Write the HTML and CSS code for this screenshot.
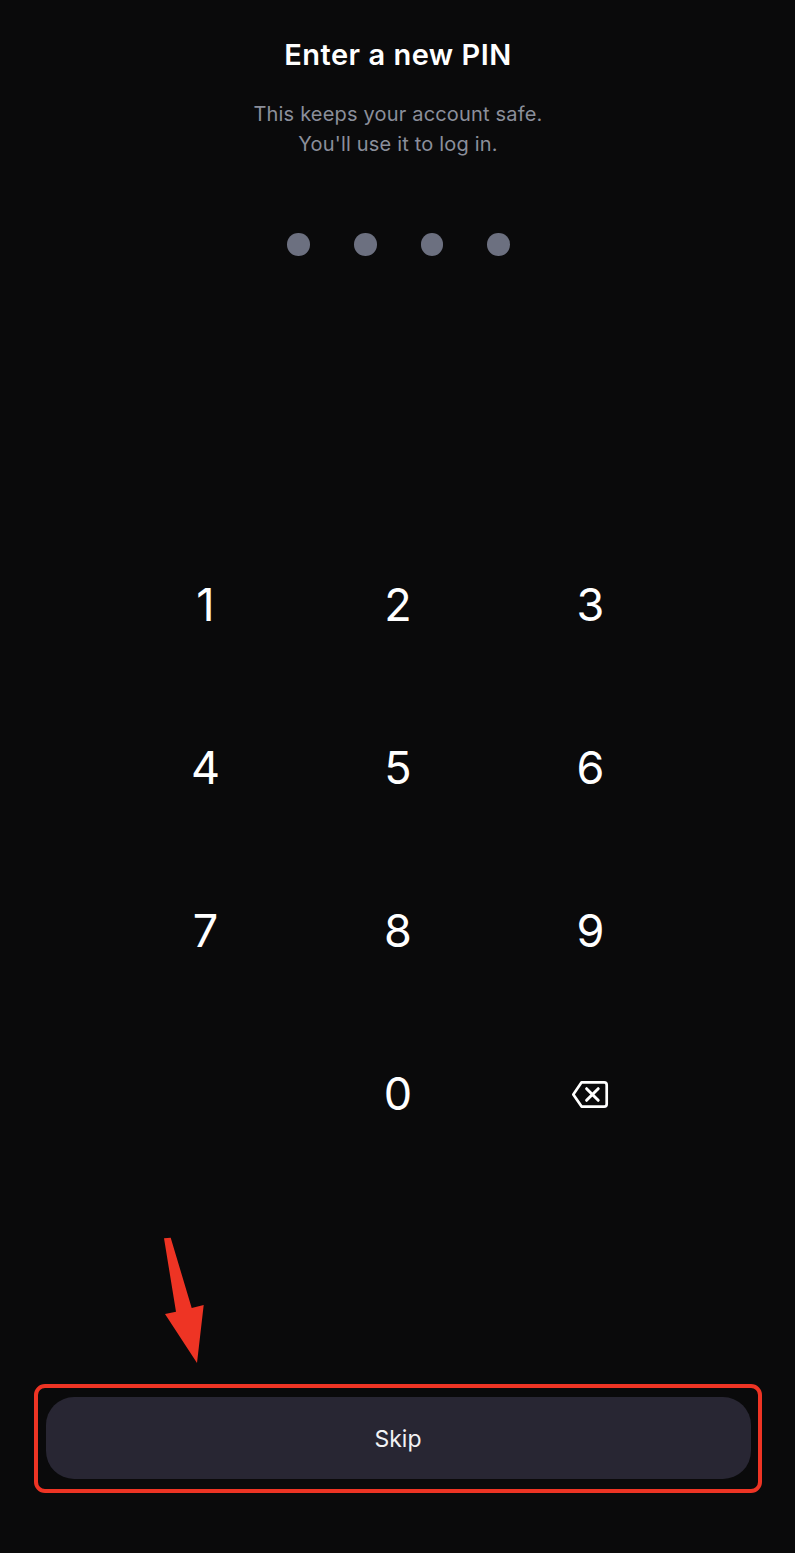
FILE: index.html
```html
<!DOCTYPE html>
<html lang="en">
<head>
<meta charset="utf-8">
<title>Enter a new PIN</title>
<link rel="stylesheet" href="styles.css">
</head>
<body>
<main class="screen">
  <header class="intro">
    <h1 class="title">Enter a new PIN</h1>
    <p class="subtitle">This keeps your account safe.<br>You'll use it to log in.</p>
  </header>
  <div class="dots">
    <span class="dot"></span><span class="dot"></span><span class="dot"></span><span class="dot"></span>
  </div>
  <div class="keypad">
    <button class="key">1</button>
    <button class="key">2</button>
    <button class="key">3</button>
    <button class="key">4</button>
    <button class="key">5</button>
    <button class="key">6</button>
    <button class="key">7</button>
    <button class="key">8</button>
    <button class="key">9</button>
    <span class="key"></span>
    <button class="key">0</button>
    <button class="key" aria-label="Delete">
      <svg class="backspace" width="38" height="28" viewBox="0 0 38 28" fill="none" stroke="#fff" stroke-width="2.7" stroke-linejoin="round" stroke-linecap="round">
        <path d="M9.6 2.3H32.1a2.6 2.6 0 0 1 2.6 2.6V24a2.6 2.6 0 0 1-2.6 2.6H9.6L1.3 14.5Z"/>
        <path stroke-width="3" d="M14.6 8.7L26.2 20.3M26.2 8.7L14.6 20.3"/>
      </svg>
    </button>
  </div>
  <button class="skip">Skip</button>
  <div class="callout-box"></div>
  <svg class="callout-arrow" width="44" height="130" viewBox="160 1235 44 130">
    <path fill="#ee3424" d="M164 1238.3L170.7 1237.7L191.7 1308L203.7 1305L197 1363L165 1314L176 1311.7Z"/>
  </svg>
</main>
</body>
</html>
```
FILE: styles.css
```css
* { box-sizing: border-box; }
html, body { margin: 0; padding: 0; }
body { background: #0a0a0b; font-family: Inter, "Liberation Sans", sans-serif; }
.screen {
  position: relative;
  width: 795px;
  height: 1553px;
  overflow: hidden;
  display: flex;
  flex-direction: column;
  align-items: center;
  background: #0a0a0b;
}
.intro { padding-top: 37px; padding-left: 1px; text-align: center; }
.title {
  margin: 0;
  font-size: 29px;
  line-height: 36px;
  letter-spacing: 0.5px;
  font-weight: 600;
  color: #fff;
}
.subtitle {
  margin: 26px 0 0;
  font-size: 20px;
  line-height: 30px;
  letter-spacing: 0.18px;
  font-weight: 400;
  color: #8b8f9b;
}
.dots { display: flex; gap: 44px; margin-top: 74px; margin-left: 2px; }
.dot { width: 22.6px; height: 22.6px; border-radius: 50%; background: #6c7080; }
.keypad {
  display: grid;
  grid-template-columns: repeat(3, 192.5px);
  grid-auto-rows: 163px;
  margin-top: 267.5px;
  margin-left: 1px;
}
.key {
  display: flex;
  align-items: center;
  justify-content: center;
  padding: 0;
  border: 0;
  background: none;
  color: #fff;
  font-family: inherit;
  font-size: 45px;
  font-weight: 375;
}
.backspace { display: block; }
.skip {
  width: 704.5px;
  height: 82px;
  margin-top: 222px;
  margin-left: 2px;
  padding: 2px 1px 0 0;
  border: 0;
  border-radius: 28px;
  background: #282633;
  color: #f2f2f4;
  font-family: inherit;
  font-size: 23px;
  font-weight: 400;
}
.callout-box {
  position: absolute;
  left: 34px;
  top: 1384px;
  width: 728px;
  height: 109px;
  border: 4px solid #ee3424;
  border-radius: 11px;
}
.callout-arrow { position: absolute; left: 160px; top: 1235px; }
```
